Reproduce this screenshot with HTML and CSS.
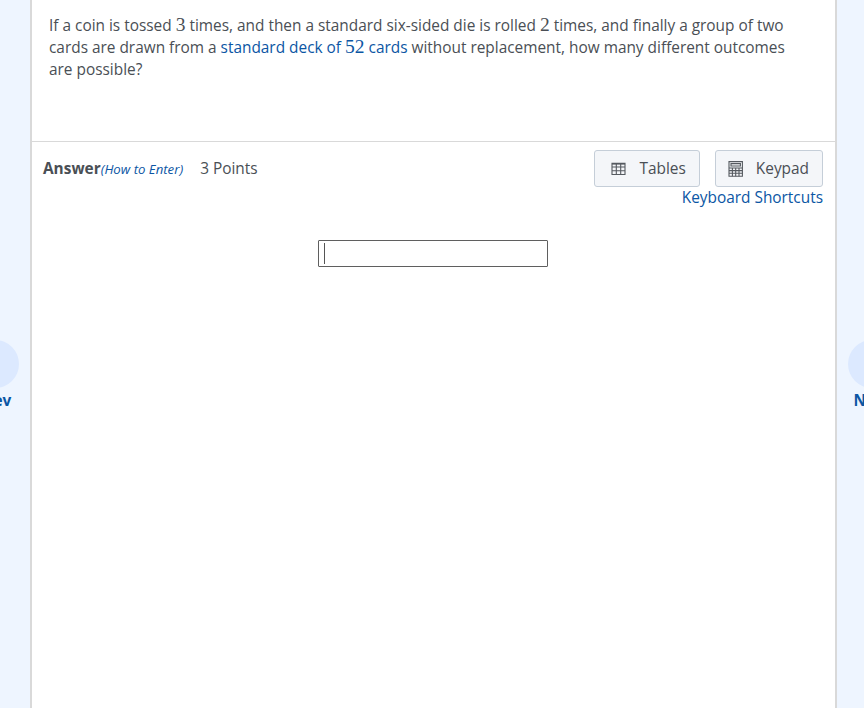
FILE: index.html
```html
<!DOCTYPE html>
<html lang="en">
<head>
    <meta charset="UTF-8">
    <title>Question</title>
    <link rel="stylesheet" href="styles.css">
</head>
<body>
    <a class="nav-btn nav-prev"><span class="nav-circle"></span><span class="nav-label">Prev</span></a>

    <div class="question-card">
        <div class="question-text">
            If a coin is tossed <span class="math">3</span> times, and then a standard six-sided die is rolled <span class="math">2</span> times, and finally a group of two cards are drawn from a <a class="link">standard deck of <span class="math">52</span> cards</a> without replacement, how many different outcomes are possible?
        </div>

        <div class="answer-head">
            <div class="answer-title">
                <span class="answer-label">Answer</span><a class="link how-to">(How to Enter)</a>
                <span class="points">3 Points</span>
            </div>
            <div class="answer-tools">
                <div class="tool-buttons">
                    <button class="tool-btn">
                        <svg class="tool-icon" width="16" height="16" viewBox="0 0 16 16">
                            <path d="M1 2.2h13v11.3h-13z M1 6h13 M1 9.7h13 M5.3 2.2v11.3 M9.7 2.2v11.3" fill="none" stroke="#555a60" stroke-width="1.1"/>
                            <path d="M1 2h13v1.6h-13z" fill="#555a60"/>
                        </svg>
                        Tables
                    </button>
                    <button class="tool-btn keypad-btn">
                        <svg class="tool-icon" width="16" height="16" viewBox="0 0 16 16">
                            <path d="M1 .6h13.4v14.6h-13.4z M3 2.6h9.4v2.4h-9.4z" fill="none" stroke="#555a60" stroke-width="1.1"/>
                            <path d="M1 7h13.4 M1 9.6h13.4 M1 12.3h13.4 M4.4 7v8.2 M7.7 7v8.2 M11 7v8.2" fill="none" stroke="#555a60" stroke-width="1.1"/>
                        </svg>
                        Keypad
                    </button>
                </div>
                <a class="link shortcuts">Keyboard Shortcuts</a>
            </div>
        </div>

        <div class="answer-box-wrap">
            <div class="answer-box"><span class="caret"></span></div>
        </div>
    </div>

    <a class="nav-btn nav-next"><span class="nav-circle"></span><span class="nav-label">Next</span></a>
</body>
</html>
```

FILE: styles.css
```css
html, body {
    height: 100%;
}

body {
    margin: 0;
    background-color: #eef5ff;
    font-family: "Open Sans", sans-serif;
    font-size: 15.4px;
    line-height: 22px;
    color: #4a4f55;
    overflow: hidden;
    position: relative;
}

.question-card {
    box-sizing: border-box;
    width: 807px;
    height: 708px;
    margin-left: 30px;
    background-color: #ffffff;
    border-left: 2px solid #d9d9d9;
    border-right: 2px solid #d9d9d9;
}

.question-text {
    box-sizing: border-box;
    height: 142px;
    padding: 15px 40px 0 17px;
    border-bottom: 1px solid #d9d9d9;
}

.math {
    font-family: "Liberation Serif", serif;
    font-size: 19.5px;
    line-height: 1;
}

.link {
    color: #0b56a4;
    text-decoration: none;
}

.answer-head {
    display: flex;
    justify-content: space-between;
    padding: 8px 12px 0 11px;
}

.answer-title {
    padding-top: 8px;
}

.answer-label {
    font-weight: 700;
}

.how-to {
    font-size: 13.2px;
    font-style: italic;
}

.points {
    margin-left: 13px;
}

.answer-tools {
    display: flex;
    flex-direction: column;
    align-items: flex-end;
}

.tool-buttons {
    display: flex;
    gap: 15px;
}

.tool-btn {
    display: flex;
    align-items: center;
    height: 37px;
    padding: 0 13px 0 16px;
    border: 1px solid #c5ced8;
    border-radius: 3px;
    background-color: #f4f6f9;
    font-family: inherit;
    font-size: 15.4px;
    color: #4a4f55;
}

.tool-icon {
    margin-right: 13px;
}

.keypad-btn {
    padding-left: 12px;
}

.keypad-btn .tool-icon {
    margin-right: 12px;
}

.answer-box-wrap {
    display: flex;
    justify-content: center;
    padding: 31px 1px 0 0;
}

.answer-box {
    box-sizing: border-box;
    width: 230px;
    height: 27px;
    padding: 2px 5px;
    border: 1px solid #5f5f5f;
    border-radius: 1px;
}

.caret {
    display: block;
    width: 1px;
    height: 21px;
    background-color: #555555;
}

.nav-btn {
    position: absolute;
    top: 340px;
    width: 48px;
    color: #0b56a4;
    font-weight: 700;
    text-align: center;
}

.nav-prev {
    left: -29px;
}

.nav-prev .nav-label {
    padding-right: 2px;
}

.nav-next {
    left: 848px;
}

.nav-circle {
    display: block;
    width: 48px;
    height: 48px;
    border-radius: 50%;
    background-color: #dce9ff;
}

.nav-label {
    display: block;
    margin-top: 2px;
}
```
